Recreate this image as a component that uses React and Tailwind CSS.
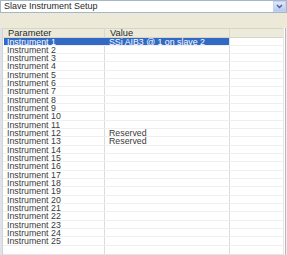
import React from "react";

const rows = Array.from({ length: 25 }, (_, i) => ({
  name: `Instrument ${i + 1}`,
  value: i === 0 ? "SSi AIB3 @ 1 on slave 2" : i === 11 || i === 12 ? "Reserved" : "",
}));

export default function App() {
  return (
    <div className="w-[287px] h-[255px] bg-[#ece9d8] overflow-hidden font-['Liberation_Sans',Arial,sans-serif] text-[8.8px] text-[#3a3a3a]">
      {/* dropdown */}
      <div className="h-[13px] border border-[#a5b6c8] bg-white flex items-center justify-between">
        <span className="pl-[3px] leading-[11px] text-[9px] text-[#2a2a2a]">Slave Instrument Setup</span>
        <div className="w-[13px] h-[11px] bg-gradient-to-b from-[#dfe8fb] to-[#b6c9f2] border border-[#c3d2f0] flex items-center justify-center">
          <svg width="7" height="5" viewBox="0 0 7 5">
            <path d="M1 1 L3.5 3.5 L6 1" stroke="#4d6185" strokeWidth="1.4" fill="none" />
          </svg>
        </div>
      </div>
      <div className="h-[15px]" />
      {/* grid */}
      <div className="flex h-[227px]">
        <div className="w-[3px] bg-[#dfe3e6] border-r border-[#d0d4d8]" />
        <div className="w-[280px] flex flex-col bg-white">
          {/* header */}
          <div className="flex h-[9.5px] bg-[#ebeadb] border-t border-[#d8d5c6] border-b border-[#d6d2c2] leading-[8px]">
            <div className="w-[101px] pl-[5px] text-[9.3px] text-[#2a2a2a]">Parameter</div>
            <div className="w-[125px] pl-[5px] text-[9.3px] text-[#2a2a2a] border-l border-[#ddd9c9]">Value</div>
            <div className="flex-1 border-l border-[#ddd9c9]" />
          </div>
          {rows.map((r, i) => {
            const sel = i === 0;
            return (
              <div key={i} className="flex h-[8.333px] border-b border-[#efefef] leading-[8px]">
                <div className={`whitespace-nowrap ${sel ? "bg-[#316ac5] text-white ml-[1px] w-[100px] pl-[3px]" : "w-[101px] pl-[4px]"}`}>{r.name}</div>
                <div className={`w-[125px] pl-[4px] whitespace-nowrap border-l ${sel ? "bg-[#316ac5] text-white border-[#316ac5]" : "border-[#dcdcdc]"}`}>{r.value}</div>
                <div className="flex-1 border-l border-[#dcdcdc]" />
              </div>
            );
          })}
          <div className="flex flex-1 border-b border-[#e4e4e4]">
            <div className="w-[101px]" />
            <div className="w-[125px] border-l border-[#dcdcdc]" />
            <div className="flex-1 border-l border-[#dcdcdc]" />
          </div>
        </div>
        <div className="w-[4px] flex bg-white">
          <div className="w-[1px] bg-[#e6e6e6]" />
          <div className="w-[1px]" />
          <div className="w-[1px] bg-[#b9b9b9]" />
          <div className="w-[1px] bg-[#ececec]" />
        </div>
      </div>
    </div>
  );
}
